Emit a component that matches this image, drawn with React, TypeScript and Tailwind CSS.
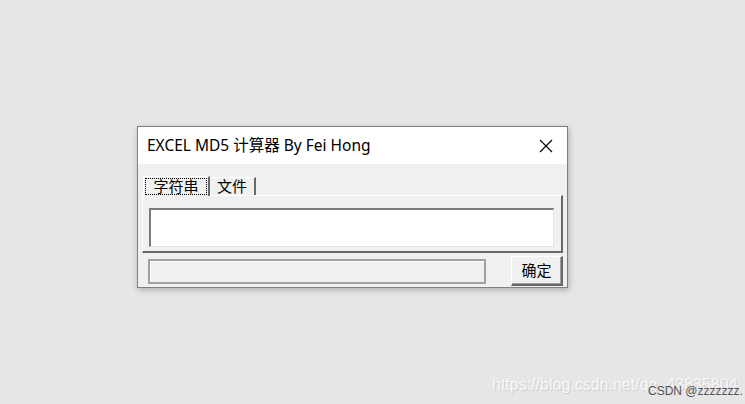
import React from 'react';

const cjk = "font-['Noto_Sans','Noto_Sans_CJK_SC',sans-serif]";

function TitleBar() {
    return (
        <div className="h-[37px] bg-white flex items-center justify-between pl-[9px] pr-[14px]">
            <span className={`${cjk} text-[15.5px] text-black leading-none`}>EXCEL MD5 计算器 By Fei Hong</span>
            <svg width="14" height="14" viewBox="0 0 14 14" className="text-black">
                <path d="M1 1 L13 13 M13 1 L1 13" stroke="currentColor" strokeWidth="1.1" />
            </svg>
        </div>
    );
}

function Tabs() {
    return (
        <div className="flex items-end pl-[5px] h-[19px]">
            {/* selected tab */}
            <div className="h-[20px] -mb-[1px] relative z-10 border-t border-l border-white border-r-2 border-r-[#696969] bg-[#f0f0f0] px-[1px] pt-[1px]">
                <div className={`${cjk} h-[17px] w-[62px] border border-dotted border-black flex items-center justify-center text-[15px] leading-none text-black`}>
                    字符串
                </div>
            </div>
            <div className={`${cjk} h-[18px] w-[46px] border-t border-white border-r-2 border-r-[#696969] bg-[#f0f0f0] flex items-center justify-center text-[15px] leading-none text-black`}>
                文件
            </div>
        </div>
    );
}

function Panel() {
    return (
        <div className="mx-[4px] h-[58px] border-t border-l border-white border-r-2 border-b-2 border-r-[#696969] border-b-[#696969] bg-[#f0f0f0] pl-[6px] pr-[7px] pt-[12px]">
            <div className="h-[39px] border-t-2 border-l-2 border-[#7a7a7a] border-r border-b border-r-[#e3e3e3] border-b-[#e3e3e3] bg-white" />
        </div>
    );
}

function BottomRow() {
    return (
        <div className="flex items-start pl-[10px] pr-[4px] pt-[3px]">
            <div className="mt-[3px] h-[25px] w-[338px] border-2 border-[#a0a0a0] bg-[#f0f0f0] shadow-[inset_1px_1px_0_#ffffff]" />
            <button className={`${cjk} ml-auto h-[30px] w-[52px] border-t border-l border-white border-r-2 border-b-2 border-r-[#696969] border-b-[#696969] bg-[#f0f0f0] shadow-[inset_-1px_-1px_0_#a0a0a0] flex items-center justify-center text-[15px] leading-none text-black`}>
                确定
            </button>
        </div>
    );
}

export default function App() {
    return (
        <div className="relative w-[745px] h-[404px] bg-[#e6e6e6] overflow-hidden">
            <div className="absolute left-[137px] top-[126px] w-[431px] h-[162px] border border-[#7f7f7f] bg-[#f0f0f0] shadow-[1px_2px_6px_rgba(0,0,0,0.25)] flex flex-col">
                <TitleBar />
                <div className="pt-[12px]">
                    <Tabs />
                    <Panel />
                    <BottomRow />
                </div>
            </div>

            {/* watermark */}
            <div className="absolute left-[492px] top-[373px] whitespace-nowrap font-['Liberation_Sans',sans-serif] text-[16px] text-white/80 [text-shadow:1px_1px_1px_rgba(0,0,0,0.12)]">
                https://blog.csdn.net/qq_43835804
            </div>
            <div className="absolute left-[648px] top-[382px] whitespace-nowrap font-['Liberation_Sans',sans-serif] text-[12px] text-[#555]">
                CSDN @zzzzzzz.
            </div>
        </div>
    );
}
